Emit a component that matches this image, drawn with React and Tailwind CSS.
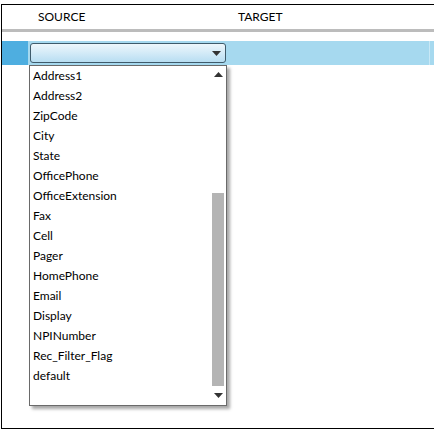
import React from 'react';

const FIELDS = [
  'Address1', 'Address2', 'ZipCode', 'City', 'State', 'OfficePhone', 'OfficeExtension',
  'Fax', 'Cell', 'Pager', 'HomePhone', 'Email', 'Display', 'NPINumber', 'Rec_Filter_Flag', 'default',
];

function Arrow({ up }) {
  return (
    <svg width="9" height="5" viewBox="0 0 9 5" className="block">
      {up ? <path d="M0 5 L4.5 0 L9 5 Z" fill="#333" /> : <path d="M0 0 L9 0 L4.5 5 Z" fill="#333" />}
    </svg>
  );
}

export default function App() {
  return (
    <div className="w-[434px] h-[432px] bg-white pt-[4px] pl-[1px] font-['Lato','Liberation_Sans',sans-serif] text-[12px] text-black">
      <div className="relative h-[425px] border-t border-l border-b border-black">
        {/* header */}
        <div className="flex items-center h-[24px] text-[12px]">
          <div className="pl-[36px] w-[236px]">SOURCE</div>
          <div>TARGET</div>
        </div>
        <div className="h-[3px] bg-[#bcbcbc]" />
        <div className="h-[9px]" />

        {/* selected row */}
        <div className="flex h-[24px] bg-[#a6d9ef]">
          <div className="w-[26px] bg-[#4eaee0]" />
          <div className="flex-1 pl-[2px] pt-[2px]">
            <div className="w-[196px] h-[20px] rounded-[3px] border border-[#3f5b6b] bg-gradient-to-b from-[#eef7fc] to-[#b8def2] flex items-center justify-end pr-[4px]">
              <Arrow />
            </div>
          </div>
          <div className="w-[1px] bg-[#c8e8f6] mr-[4px]" />
        </div>

        {/* dropdown list */}
        <div className="absolute left-[27px] top-[60px] w-[198px] h-[341px] bg-white border border-[#6a6a6a] shadow-[3px_3px_3px_rgba(0,0,0,0.35)] flex">
          <div className="flex-1 flex flex-col">
            {FIELDS.map((f) => (
              <div key={f} className="h-[20px] leading-[20px] pl-[3px] whitespace-nowrap">{f}</div>
            ))}
          </div>
          <div className="w-[12px] mr-[2px] flex flex-col items-center">
            <div className="h-[15px] flex items-center justify-center pt-[1px]"><Arrow up /></div>
            <div className="h-[112px]" />
            <div className="w-[12px] h-[193px] bg-[#b4b4b4]" />
            <div className="h-[19px] flex items-center justify-center"><Arrow /></div>
          </div>
        </div>
      </div>
    </div>
  );
}
